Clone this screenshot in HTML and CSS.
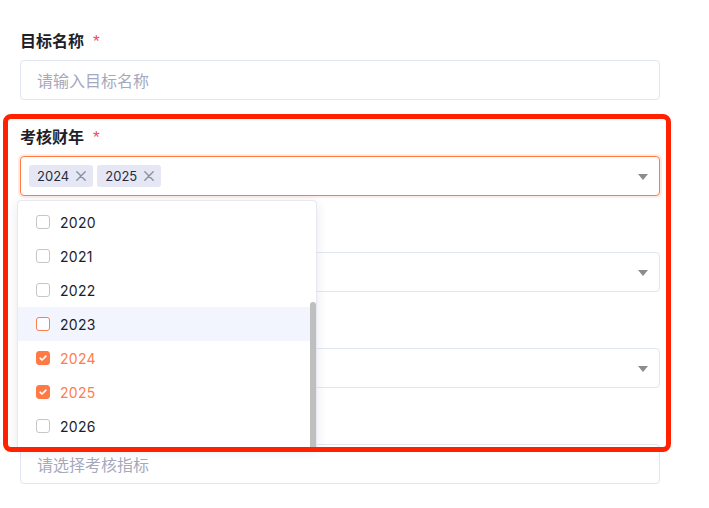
FILE: index.html
```html
<!DOCTYPE html>
<html lang="zh-CN">
<head>
<meta charset="utf-8">
<title>目标设置</title>
<link rel="stylesheet" href="styles.css">
</head>
<body>
<div class="page">
  <form class="form">
    <div class="field">
      <div class="label">目标名称<span class="req">*</span></div>
      <div class="input"><span class="placeholder">请输入目标名称</span></div>
    </div>
    <div class="field">
      <div class="label">考核财年<span class="req">*</span></div>
      <div class="input select focused">
        <div class="tags">
          <span class="tag">2024<svg class="x" viewBox="0 0 10 10" width="10" height="10"><path d="M0.8 0.8 L9.2 9.2 M9.2 0.8 L0.8 9.2" stroke="#8b8fa3" stroke-width="1.4" stroke-linecap="round"/></svg></span>
          <span class="tag">2025<svg class="x" viewBox="0 0 10 10" width="10" height="10"><path d="M0.8 0.8 L9.2 9.2 M9.2 0.8 L0.8 9.2" stroke="#8b8fa3" stroke-width="1.4" stroke-linecap="round"/></svg></span>
        </div>
        <span class="arrow"></span>
      </div>
    </div>
    <div class="field">
      <div class="label"></div>
      <div class="input select"><span class="placeholder"></span><span class="arrow"></span></div>
    </div>
    <div class="field">
      <div class="label"></div>
      <div class="input select"><span class="placeholder"></span><span class="arrow"></span></div>
    </div>
    <div class="field">
      <div class="label"></div>
      <div class="input"><span class="placeholder">请选择考核指标</span></div>
    </div>
  </form>

  <div class="dropdown">
    <ul class="options">
      <li class="option"><span class="cb"></span>2020</li>
      <li class="option"><span class="cb"></span>2021</li>
      <li class="option"><span class="cb"></span>2022</li>
      <li class="option hover"><span class="cb"></span>2023</li>
      <li class="option checked"><span class="cb"><svg viewBox="0 0 14 14" width="14" height="14"><path d="M3.6 7.2 L6 9.4 L10.4 4.8" fill="none" stroke="#fff" stroke-width="1.8" stroke-linecap="round" stroke-linejoin="round"/></svg></span>2024</li>
      <li class="option checked"><span class="cb"><svg viewBox="0 0 14 14" width="14" height="14"><path d="M3.6 7.2 L6 9.4 L10.4 4.8" fill="none" stroke="#fff" stroke-width="1.8" stroke-linecap="round" stroke-linejoin="round"/></svg></span>2025</li>
      <li class="option"><span class="cb"></span>2026</li>
    </ul>
    <div class="thumb"></div>
  </div>

  <div class="highlight"></div>
</div>
</body>
</html>
```
FILE: styles.css
```css
* { box-sizing: border-box; }
html, body { margin: 0; padding: 0; background: #fff; }
body {
  font-family: "Inter", "Noto Sans CJK SC", sans-serif;
  color: #1f2030;
  width: 709px;
  height: 508px;
  overflow: hidden;
}
.page { position: relative; width: 709px; height: 508px; }
.form { padding: 28px 49px 0 20px; margin: 0; display: flex; flex-direction: column; gap: 24px; }
.field { display: flex; flex-direction: column; gap: 8px; }
.label {
  font-family: "Noto Sans CJK SC", sans-serif;
  font-size: 16px;
  font-weight: 700;
  line-height: 24px;
  height: 24px;
  color: #1e1f2b;
  display: flex;
  align-items: center;
}
.req { color: #f5475b; font-weight: 400; margin-left: 9px; font-family: "Liberation Sans", sans-serif; font-size: 17px; position: relative; top: 2px; }
.input {
  height: 40px;
  border: 1px solid #e2e5f2;
  border-radius: 4px;
  display: flex;
  align-items: center;
  padding: 0 16px;
  background: #fff;
}
.placeholder { font-family: "Noto Sans CJK SC", sans-serif; font-size: 16px; color: #a6a9bd; flex: 1; }
.select { padding: 0 8px 0 8px; }
.focused { border-color: #ff7a45; box-shadow: 0 0 0 2px rgba(255, 122, 69, 0.14); }
.tags { flex: 1; display: flex; gap: 4px; }
.tag {
  display: inline-flex;
  align-items: center;
  height: 22px;
  padding: 0 7px 0 8px;
  background: #e5e8f4;
  border-radius: 3px;
  font-size: 13px;
  color: #2a2b38;
}
.tag .x { margin-left: 7px; display: block; flex-shrink: 0; }
.arrow {
  width: 0; height: 0;
  border-left: 5px solid transparent;
  border-right: 5px solid transparent;
  border-top: 6px solid #8c8c8c;
  margin-left: auto;
  margin-right: 3px;
  margin-top: 2px;
}
.select .placeholder { flex: 1; }

.dropdown {
  position: absolute;
  left: 17px;
  top: 200px;
  width: 300px;
  height: 248px;
  background: #fff;
  border: 1px solid #e6e8f2;
  border-radius: 4px 4px 0 0;
  box-shadow: 0 3px 12px rgba(30, 40, 80, 0.10);
  overflow: hidden;
}
.options { list-style: none; margin: 0; padding: 4px 0 0; }
.option {
  height: 34px;
  display: flex;
  align-items: center;
  padding-left: 18px;
  font-size: 14px;
  color: #1d1e2c;
  letter-spacing: 0.3px;
}
.option.hover { background: #f2f5fd; margin-right: 6px; }
.option.checked { color: #ff7d4d; }
.cb {
  width: 14px; height: 14px;
  border: 1px solid #c6c6c6;
  border-radius: 3px;
  margin-right: 10px;
  background: #fff;
  display: inline-flex;
  align-items: center;
  justify-content: center;
}
.hover .cb { border-color: #ff7d4d; }
.checked .cb { background: #ff7a45; border-color: #ff7a45; }
.cb svg { display: block; }
.thumb {
  position: absolute;
  right: 0;
  top: 101px;
  width: 6px;
  height: 160px;
  border-radius: 3px;
  background: #bfbfbf;
}

.highlight {
  position: absolute;
  left: 3px;
  top: 114px;
  width: 668px;
  height: 338px;
  border: 5px solid #ff2100;
  border-radius: 8px;
  pointer-events: none;
}
```
